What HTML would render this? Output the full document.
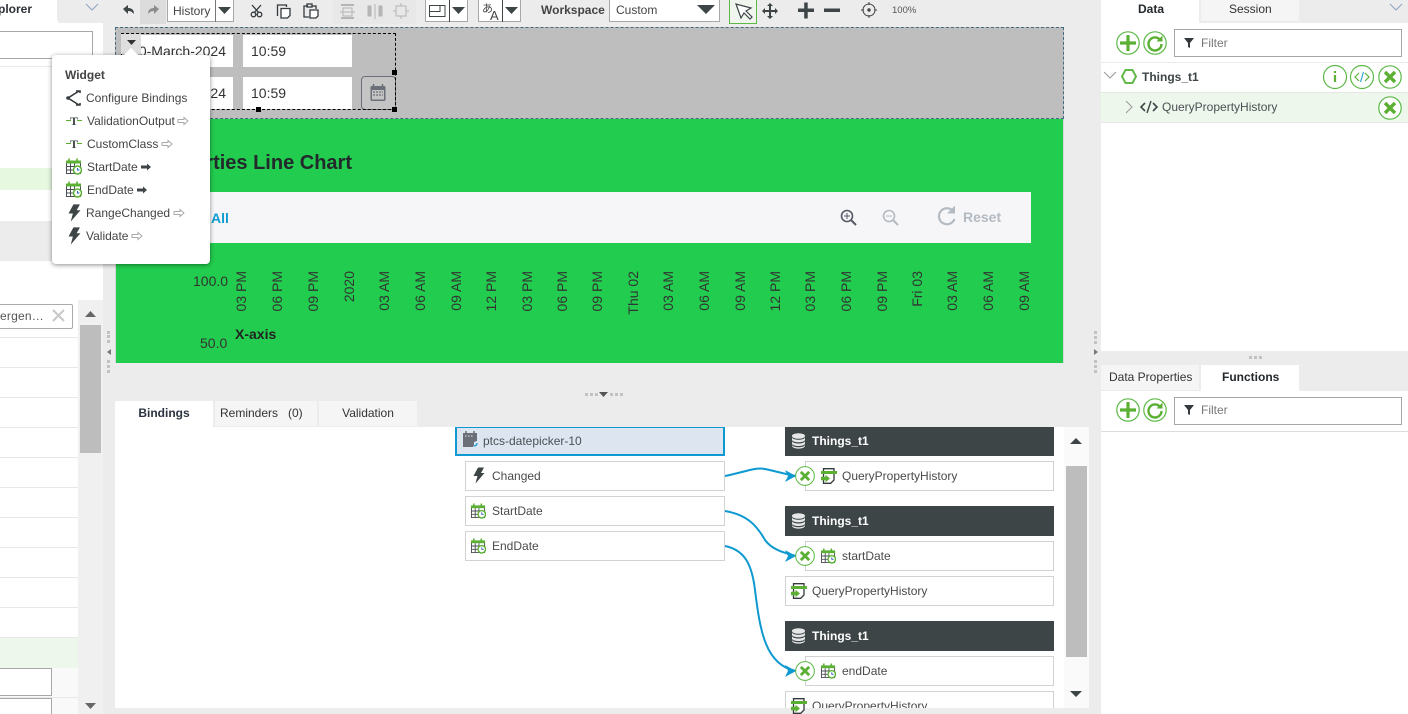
<!DOCTYPE html>
<html style="width:1408px;height:714px;overflow:hidden"><head><meta charset="utf-8">
<style>
*{box-sizing:border-box}
html,body{margin:0;padding:0}
body{width:1408px;height:714px;overflow:hidden;position:relative;background:#ececec;font:12px "Liberation Sans",sans-serif;color:#444}
.a{position:absolute}
.t{position:absolute;white-space:nowrap;line-height:14px}
.row{position:absolute;left:0;width:78px;height:1px;background:#e8e8e8}
.node{position:absolute;background:#fff;border:1px solid #d2d2d2;height:30px;line-height:28px;color:#4a4a4a}
.hd{position:absolute;background:#3d4547;color:#fff;font-weight:bold;left:785px;width:269px;height:30px;line-height:30px;padding-left:27px}
.box{position:absolute;background:#fff;border:1px solid #a8a8a8}
.filter{position:absolute;left:1174px;width:228px;height:28px;background:#fff;border:1px solid #a6a6a6;color:#777;line-height:26px;padding-left:26px}
.tab{position:absolute;text-align:center;color:#333;height:25px;line-height:24px}
svg{position:absolute;left:0;top:0;overflow:visible}
</style></head>
<body>
<!-- left panel -->
<div class="a" style="left:0;top:0;width:103px;height:714px;background:#f0f0f0"></div>
<div class="a" style="left:0;top:0;width:103px;height:300px;background:#fff"></div>
<div class="a" style="left:57px;top:0;width:46px;height:23px;background:#ececec;border-radius:0 0 0 3px"></div>
<div class="t" style="left:-2px;top:2px;font-weight:bold;color:#2c3136">plorer</div>
<div class="box" style="left:-2px;top:31px;width:95px;height:28px"></div>
<div class="a" style="left:0;top:66px;width:103px;height:1px;background:#eaeaea"></div>
<div class="a" style="left:0;top:168px;width:103px;height:22px;background:#e6f8e0"></div>
<div class="a" style="left:0;top:221px;width:103px;height:40px;background:#ececec"></div>
<div class="a" style="left:0;top:300px;width:78px;height:414px;background:#fff"></div>
<div class="a" style="left:-4px;top:304px;width:77px;height:25px;background:#fff;border:1px solid #aaa;border-radius:2px"></div>
<div class="t" style="left:0;top:309px;color:#555;letter-spacing:.2px">ergen…</div>
<div class="row" style="top:337px"></div><div class="row" style="top:367px"></div><div class="row" style="top:397px"></div><div class="row" style="top:427px"></div><div class="row" style="top:457px"></div><div class="row" style="top:487px"></div><div class="row" style="top:517px"></div><div class="row" style="top:547px"></div><div class="row" style="top:577px"></div><div class="row" style="top:607px"></div><div class="row" style="top:637px"></div>
<div class="a" style="left:0;top:638px;width:78px;height:30px;background:#eef7ec"></div>
<div class="a" style="left:0;top:668px;width:78px;height:46px;background:#f9f9f9"></div>
<div class="a" style="left:0;top:697px;width:78px;height:1px;background:#e8e8e8"></div>
<div class="box" style="left:-2px;top:668px;width:54px;height:28px"></div>
<div class="box" style="left:-2px;top:698px;width:54px;height:16px;border-bottom:none"></div>
<div class="a" style="left:80px;top:325px;width:21px;height:128px;background:#bdbdbd"></div>

<!-- toolbar -->
<div class="a" style="left:140px;top:0;width:26px;height:24px;background:#dcdcdc"></div>
<div class="box" style="left:167px;top:-2px;width:67px;height:24px"></div>
<div class="a" style="left:215px;top:0;width:1px;height:22px;background:#777"></div>
<div class="t" style="left:173px;top:4px;color:#444">History</div>
<div class="a" style="left:333px;top:0;width:83px;height:24px;background:#e8e8e8"></div>
<div class="box" style="left:425px;top:-2px;width:43px;height:24px"></div>
<div class="a" style="left:449px;top:0;width:1px;height:22px;background:#444"></div>
<div class="box" style="left:478px;top:-2px;width:43px;height:24px"></div>
<div class="a" style="left:502px;top:0;width:1px;height:22px;background:#444"></div>
<div class="t" style="left:541px;top:3px;font-weight:bold;color:#444">Workspace</div>
<div class="box" style="left:609px;top:-2px;width:111px;height:24px"></div>
<div class="t" style="left:616px;top:3px;color:#444">Custom</div>
<div class="a" style="left:729px;top:-2px;width:28px;height:26px;background:#f0f5ee;border:1px solid #5cb946"></div>
<div class="t" style="left:892px;top:4px;font-size:9.5px;color:#555">100%</div>

<!-- canvas -->
<div class="a" style="left:115px;top:27px;width:949px;height:92px;background:#bebebe;border:1px dashed #456a80"></div>
<div class="a" style="left:115px;top:119px;width:1px;height:244px;background:#d8d8d8"></div>
<div class="a" style="left:1063px;top:119px;width:1px;height:244px;background:#d8d8d8"></div>
<div class="a" style="left:116px;top:119px;width:947px;height:244px;background:#22cc4e"></div>
<div class="a" style="left:141px;top:35px;width:92px;height:32px;background:#fff;overflow:hidden"><div class="t" style="right:7px;top:9px;font-size:14px;color:#333">10-March-2024</div></div>
<div class="a" style="left:243px;top:35px;width:109px;height:32px;background:#fff"><div class="t" style="left:8px;top:9px;font-size:14px;color:#333">10:59</div></div>
<div class="a" style="left:141px;top:77px;width:92px;height:32px;background:#fff;overflow:hidden"><div class="t" style="right:7px;top:9px;font-size:14px;color:#333">10-March-2024</div></div>
<div class="a" style="left:243px;top:77px;width:109px;height:32px;background:#fff"><div class="t" style="left:8px;top:9px;font-size:14px;color:#333">10:59</div></div>
<div class="a" style="left:361px;top:76px;width:35px;height:34px;border:1px solid #6b7078;border-radius:4px;background:#c4c4c4"></div>
<div class="a" style="left:121px;top:33px;width:275px;height:77px;border:1px dashed #000"></div>
<div class="a" style="left:121px;top:34px;width:20px;height:20px;background:#dedede"></div>
<div class="a" style="left:392px;top:70px;width:5px;height:5px;background:#000"></div>
<div class="a" style="left:256px;top:107px;width:5px;height:5px;background:#000"></div>
<div class="a" style="left:392px;top:107px;width:5px;height:5px;background:#000"></div>
<div class="t" style="right:1056px;top:151px;font-size:20px;line-height:24px;font-weight:bold;color:#23282c">Properties Line Chart</div>
<div class="a" style="left:135px;top:192px;width:896px;height:51px;background:#f6f6f8"></div>
<div class="t" style="left:211px;top:211px;font-size:14px;font-weight:bold;color:#0f9bd1">All</div>
<div class="t" style="left:963px;top:209px;font-size:14px;line-height:16px;font-weight:bold;color:#b4bac2">Reset</div>
<div class="t" style="left:193px;top:274px;font-size:14px;color:#333">100.0</div>
<div class="t" style="left:200px;top:336px;font-size:14px;color:#333">50.0</div>
<div class="t" style="left:235px;top:327px;font-size:14px;font-weight:bold;color:#222">X-axis</div>

<!-- bottom panel -->
<div class="a" style="left:115px;top:427px;width:974px;height:281px;background:#fff"></div>
<div class="a" style="left:1064px;top:427px;width:25px;height:281px;background:#fafafa"></div>
<div class="a" style="left:1066px;top:466px;width:21px;height:191px;background:#bdbdbd"></div>
<div class="tab" style="left:115px;top:401px;width:98px;height:26px;background:#fff;font-weight:bold;color:#2c3340">Bindings</div>
<div class="tab" style="left:215px;top:401px;width:102px;background:#f5f5f5"></div>
<div class="t" style="left:220px;top:406px;color:#333">Reminders</div>
<div class="t" style="left:288px;top:406px;color:#333">(0)</div>
<div class="tab" style="left:319px;top:401px;width:98px;background:#f5f5f5">Validation</div>

<div class="a" style="left:455px;top:427px;width:270px;height:29px;background:#dde6f0;border:2px solid #0e9ad0;border-top:1px solid #0e9ad0;line-height:26px;padding-left:26px;color:#4a4f55">ptcs-datepicker-10</div>
<div class="node" style="left:465px;top:461px;width:260px;padding-left:26px">Changed</div>
<div class="node" style="left:465px;top:496px;width:260px;padding-left:26px">StartDate</div>
<div class="node" style="left:465px;top:531px;width:260px;padding-left:26px">EndDate</div>
<div class="hd" style="top:427px;height:29px;line-height:28px">Things_t1</div>
<div class="hd" style="top:506px">Things_t1</div>
<div class="hd" style="top:621px">Things_t1</div>
<div class="node" style="left:805px;top:461px;width:249px;padding-left:36px">QueryPropertyHistory</div>
<div class="node" style="left:805px;top:541px;width:249px;padding-left:36px">startDate</div>
<div class="node" style="left:785px;top:576px;width:269px;padding-left:26px">QueryPropertyHistory</div>
<div class="node" style="left:805px;top:656px;width:249px;padding-left:36px">endDate</div>
<div class="a" style="left:785px;top:691px;width:269px;height:17px;overflow:hidden"><div class="node" style="left:0;top:0;width:269px;padding-left:26px">QueryPropertyHistory</div></div>

<!-- right panel -->
<div class="a" style="left:1101px;top:0;width:299px;height:351px;background:#fff"></div>
<div class="a" style="left:1400px;top:22px;width:8px;height:329px;background:#fff"></div>
<div class="a" style="left:1199px;top:0;width:209px;height:23px;background:#ececec"></div>
<div class="a" style="left:1201px;top:0;width:98px;height:21px;background:#f5f5f5"></div>
<div class="t" style="left:1138px;top:2px;font-weight:bold;color:#23282c">Data</div>
<div class="t" style="left:1229px;top:2px;color:#333">Session</div>
<div class="filter" style="top:29px">Filter</div>
<div class="a" style="left:1101px;top:62px;width:307px;height:1px;background:#ececec"></div>
<div class="a" style="left:1101px;top:92px;width:307px;height:31px;background:#eef7ec;border-top:1px solid #e6e6e6;border-bottom:1px solid #e6e6e6"></div>
<div class="t" style="left:1142px;top:70px;font-weight:bold;color:#3d4547">Things_t1</div>
<div class="t" style="left:1162px;top:100px;color:#4a4f55">QueryPropertyHistory</div>
<div class="a" style="left:1101px;top:365px;width:98px;height:25px;background:#f5f5f5"></div>
<div class="a" style="left:1201px;top:365px;width:98px;height:26px;background:#fff"></div>
<div class="a" style="left:1101px;top:391px;width:307px;height:323px;background:#fff"></div>
<div class="t" style="left:1109px;top:370px;color:#333">Data Properties</div>
<div class="t" style="left:1222px;top:370px;font-weight:bold;color:#23282c">Functions</div>
<div class="filter" style="top:397px;line-height:24px">Filter</div>
<div class="a" style="left:1101px;top:431px;width:307px;height:1px;background:#dcdcdc"></div>

<svg width="1408" height="714" viewBox="0 0 1408 714">
<defs>
<symbol id="cal" viewBox="0 0 16 16"><path d="M0.500 3.500h14v11.500h-14z" fill="#fff" stroke="#4a4f55"/><rect x="0" y="2" width="15" height="3" fill="#5bb033"/><path d="M3 0v3M11 0v3" stroke="#5bb033" stroke-width="1.600"/><path d="M0 8h15M0 11.500h15M4.500 5v10M8.500 5v10" stroke="#4a4f55"/><circle cx="11.500" cy="11.500" r="4" fill="#fff" stroke="#5bb033" stroke-width="1.500"/><path d="M11.500 9.500v2h2" fill="none" stroke="#2a62b8"/></symbol>
<symbol id="bolt" viewBox="0 0 12 16"><path d="M5 0h6L8 5.500h3.500L2.500 16l2-7.500H0.500z" fill="#3d4547"/></symbol>
<symbol id="svc" viewBox="0 0 16 16"><path d="M2.500 0.700h10.500V12l-3.300 3.300H2.500z" fill="#fff" stroke="#33393c" stroke-width="1.300"/><rect x="0" y="3" width="16" height="3" fill="#5bb033"/><path d="M0 8.700h4.500V6.800l4.500 3.700-4.500 3.700v-2H0z" fill="#5bb033"/></symbol>
<symbol id="x" viewBox="0 0 24 24"><circle cx="12" cy="12" r="11.200" fill="#fff" stroke="#5bb946" stroke-width="1.200"/><path d="M7 7l10 10M17 7L7 17" stroke="#5bb033" stroke-width="3.400"/></symbol>
<symbol id="db" viewBox="0 0 14 16"><ellipse cx="7" cy="3" rx="6.500" ry="2.800" fill="#e6e8e8"/><path d="M0.500 4.500c1 3 12 3 13 0v2.500c-1 3-12 3-13 0zM0.500 8.300c1 3 12 3 13 0v2.500c-1 3-12 3-13 0zM0.500 12c1 3 12 3 13 0v1c-1 3.500-12 3.500-13 0z" fill="#e6e8e8"/></symbol>
<symbol id="plus" viewBox="0 0 24 24"><circle cx="12" cy="12" r="11.200" fill="#fff" stroke="#5bb946" stroke-width="1.200"/><path d="M12 4v16M4 12h16" stroke="#5bb033" stroke-width="3.200"/></symbol>
<symbol id="ref" viewBox="0 0 24 24"><circle cx="12" cy="12" r="11.200" fill="#fff" stroke="#5bb946" stroke-width="1.200"/><path d="M17.500 9.500A6.500 6.500 0 1 0 18.500 13" fill="none" stroke="#5bb033" stroke-width="2.400"/><path d="M13.500 10.500h6v-6z" fill="#5bb033"/></symbol>
</defs>

<!-- header chevrons -->
<path d="M86 4l6 6 6-6" fill="none" stroke="#8fa3c0"/>
<path d="M1390 4l6 6 6-6" fill="none" stroke="#8fa3c0"/>
<!-- undo/redo -->
<path d="M123 9l5-4v3c4 0 6 2 6 6-2-2-3-3-6-3v3z" fill="#3d4547"/>
<path d="M159 9l-5-4v3c-4 0-6 2-6 6 2-2 3-3 6-3v3z" fill="#8c8c8c"/>
<path d="M218 7h13l-6.500 7z" fill="#3d4547"/>
<!-- cut copy paste -->
<g fill="none" stroke="#33393c" stroke-width="1.300">
<path d="M252 5l7 8M261 5l-7 8"/><circle cx="253.500" cy="14.500" r="2.300"/><circle cx="259.500" cy="14.500" r="2.300"/>
<path d="M277.500 16V5h9v2"/><path d="M281 8.500h9v7l-2.500 2.500H281z" fill="#fff"/>
<path d="M308 6h-4v11h5M312 6h4v3"/><rect x="307" y="4" width="5" height="3"/><path d="M310 10h8v6l-2 2h-6z" fill="#fff"/>
</g>
<!-- align greyed -->
<g fill="none" stroke="#b5b5b5">
<path d="M341 5h13M341 18h13" stroke-width="2"/><path d="M340 12h15M343 8h9v8h-9z"/>
<rect x="368" y="6" width="3" height="10" fill="#b5b5b5"/><rect x="379" y="6" width="3" height="10" fill="#b5b5b5"/><path d="M375 4v15"/>
<rect x="396" y="6" width="10" height="10"/><path d="M401 3v3M401 16v3M393 11h3M406 11h3"/>
</g>
<!-- layout + lang -->
<path d="M429.500 5.500h15.500v11h-15.500zM429.500 11.500h10.500V5.500" fill="none" stroke="#3d4547"/>
<path d="M452 7h13l-6.500 7z M505 7h13l-6.500 7z M697 5h18l-9 9z" fill="#3d4547"/>
<text x="482" y="12" font-size="11" fill="#444" font-family="Noto Sans CJK JP,sans-serif">あ</text>
<text x="490" y="20" font-size="13" fill="#444" font-family="Liberation Sans,sans-serif">A</text>
<!-- select, move, plus, minus, target -->
<path d="M736 4l5 14 3-5 6 6 2-2-6-6 5-3z" fill="#fff" stroke="#3d4547" stroke-width="1.200"/>
<path d="M770 3l3 3h-2v4h4V8l3 3-3 3v-2h-4v4h2l-3 3-3-3h2v-4h-4v2l-3-3 3-3v2h4V6h-2z" fill="#3d4547"/>
<path d="M798 8.500h16v3.500h-16zM804.200 2.500h3.500v16h-3.500zM824 8.500h16v3.500h-16z" fill="#3d4547"/>
<circle cx="869" cy="10" r="6" fill="none" stroke="#444"/><circle cx="869" cy="10" r="1.700" fill="#444"/><path d="M869 2v3M869 15v3M861 10h3M874 10h3" stroke="#444"/>
<!-- canvas dropdown arrow -->
<path d="M127 40h9l-4.500 5z" fill="#333"/>
<!-- calendar button -->
<g><rect x="370.500" y="86" width="15" height="15" rx="1.500" fill="#6b7078"/><rect x="372" y="90" width="12" height="9.500" fill="#c4c4c4"/><path d="M373.500 84v3M382.500 84v3" stroke="#6b7078" stroke-width="1.500"/><path d="M373 92h10M373 95h10" stroke="#6b7078" stroke-width="1.300" stroke-dasharray="2 1"/></g>
<!-- chart toolbar icons -->
<circle cx="847" cy="216" r="5.500" fill="none" stroke="#555a66" stroke-width="1.600"/><path d="M851 220l5 5" stroke="#555a66" stroke-width="2"/><path d="M844 216h6M847 213v6" stroke="#555a66"/>
<circle cx="889" cy="216" r="5.500" fill="none" stroke="#b4bac2" stroke-width="1.600"/><path d="M893 220l5 5" stroke="#b4bac2" stroke-width="2"/><path d="M886 216h6" stroke="#b4bac2"/>
<path d="M953 211a8 8 0 1 0 1.500 8" fill="none" stroke="#b4bac2" stroke-width="2.200"/><path d="M947 213.500h8v-8z" fill="#b4bac2"/>
<!-- chart labels -->
<g font-family="Liberation Sans,sans-serif" font-size="14" fill="#333" text-anchor="end">
<text transform="translate(246,271) rotate(-90)">03 PM</text>
<text transform="translate(282,271) rotate(-90)">06 PM</text>
<text transform="translate(318,271) rotate(-90)">09 PM</text>
<text transform="translate(354,271) rotate(-90)">2020</text>
<text transform="translate(389,271) rotate(-90)">03 AM</text>
<text transform="translate(425,271) rotate(-90)">06 AM</text>
<text transform="translate(461,271) rotate(-90)">09 AM</text>
<text transform="translate(496,271) rotate(-90)">12 PM</text>
<text transform="translate(532,271) rotate(-90)">03 PM</text>
<text transform="translate(567,271) rotate(-90)">06 PM</text>
<text transform="translate(602,271) rotate(-90)">09 PM</text>
<text transform="translate(638,271) rotate(-90)">Thu 02</text>
<text transform="translate(673,271) rotate(-90)">03 AM</text>
<text transform="translate(709,271) rotate(-90)">06 AM</text>
<text transform="translate(745,271) rotate(-90)">09 AM</text>
<text transform="translate(780,271) rotate(-90)">12 PM</text>
<text transform="translate(815,271) rotate(-90)">03 PM</text>
<text transform="translate(851,271) rotate(-90)">06 PM</text>
<text transform="translate(887,271) rotate(-90)">09 PM</text>
<text transform="translate(922,271) rotate(-90)">Fri 03</text>
<text transform="translate(957,271) rotate(-90)">03 AM</text>
<text transform="translate(993,271) rotate(-90)">06 AM</text>
<text transform="translate(1029,271) rotate(-90)">09 AM</text>
</g>
<!-- gutters -->
<g fill="#c2c2c2">
<rect x="107" y="331" width="3" height="3"/><rect x="107" y="335" width="3" height="3"/><rect x="107" y="340" width="3" height="3"/><rect x="107" y="360" width="3" height="3"/><rect x="107" y="365" width="3" height="3"/><rect x="107" y="370" width="3" height="3"/>
<rect x="1094" y="331" width="3" height="3"/><rect x="1094" y="336" width="3" height="3"/><rect x="1094" y="341" width="3" height="3"/><rect x="1094" y="360" width="3" height="3"/><rect x="1094" y="365" width="3" height="3"/><rect x="1094" y="370" width="3" height="3"/>
<rect x="1249" y="356" width="3" height="3"/><rect x="1254" y="356" width="3" height="3"/><rect x="1259" y="356" width="3" height="3"/>
<rect x="585" y="393" width="3" height="3"/><rect x="590" y="393" width="3" height="3"/><rect x="595" y="393" width="3" height="3"/><rect x="610" y="393" width="3" height="3"/><rect x="615" y="393" width="3" height="3"/><rect x="620" y="393" width="3" height="3"/>
</g>
<path d="M107 352l4-3v6zM1098 352l-4-3v6z" fill="#777"/>
<path d="M599 392h9l-4.500 5z" fill="#555"/>
<!-- scroll arrows -->
<path d="M85 317h11l-5.500-6zM85 703h11l-5.500 6z" fill="#666"/>
<path d="M1070 444h12l-6-6zM1070 691h12l-6 6z" fill="#3d4547"/>
<!-- connectors -->
<g fill="none" stroke="#0e9ad0" stroke-width="2">
<path d="M725 476C745 472 755 467 765 469S785 474 796 476"/>
<path d="M725 511C748 515 757 526 765 540C772 550 785 553 796 556"/>
<path d="M725 546C745 550 752 565 755 590C760 630 765 665 796 671"/>
</g>
<path d="M785 470l11 6-11 6 3-6zM785 550l11 6-11 6 3-6zM785 665l11 6-11 6 3-6z" fill="#0e9ad0"/>
<!-- node icons -->
<path d="M463 433h14v8l-3 1v3l-1 2h-10z" fill="#6b7078"/><path d="M466 431v3M474 431v3" stroke="#6b7078" stroke-width="1.500"/><path d="M465 436h1.500M468 436h1.500M471 436h1.500" stroke="#dde6f0"/><path d="M477 443a3 3 0 0 1-3 3" fill="none" stroke="#0e9ad0" stroke-width="1.300"/>
<use href="#bolt" x="473" y="467" width="12" height="17"/>
<use href="#cal" x="471" y="503" width="15" height="16"/>
<use href="#cal" x="471" y="538" width="15" height="16"/>
<use href="#db" x="791" y="433" width="15" height="16"/>
<use href="#db" x="791" y="513" width="15" height="16"/>
<use href="#db" x="791" y="628" width="15" height="16"/>
<use href="#x" x="795" y="466" width="20" height="20"/>
<use href="#x" x="795" y="546" width="20" height="20"/>
<use href="#x" x="795" y="661" width="20" height="20"/>
<use href="#svc" x="821" y="468" width="16" height="16"/>
<use href="#cal" x="821" y="548" width="15" height="16"/>
<use href="#svc" x="791" y="583" width="16" height="16"/>
<use href="#cal" x="821" y="663" width="15" height="16"/>
<use href="#svc" x="791" y="698" width="16" height="16"/>
<!-- right panel icons -->
<use href="#plus" x="1116" y="31" width="24" height="24"/>
<use href="#ref" x="1143" y="31" width="24" height="24"/>
<path d="M1184 38h10l-4 5v5l-2-1v-4z" fill="#33393c"/>
<path d="M1104 72l6 6 6-6" fill="none" stroke="#999"/>
<path d="M1125.500 70h7l3.500 6.500-3.500 6.500h-7l-3.500-6.500z" fill="#fff" stroke="#63b84a" stroke-width="2"/>
<circle cx="1335" cy="77" r="11.500" fill="#fff" stroke="#5bb946" stroke-width="1.200"/>
<path d="M1335 71v2M1335 75v7" stroke="#5bb033" stroke-width="2.200"/>
<circle cx="1362" cy="77" r="11.500" fill="#fff" stroke="#5bb946" stroke-width="1.200"/>
<path d="M1359 73l-4 4 4 4M1365 73l4 4-4 4" fill="none" stroke="#5bb033" stroke-width="1.200"/><path d="M1363.500 72l-3 10" stroke="#35a8d6" stroke-width="1.200"/>
<use href="#x" x="1378" y="65" width="24" height="24"/>
<path d="M1126 101l6 6-6 6" fill="none" stroke="#999"/>
<path d="M1145 103l-4 4 4 4M1153 103l4 4-4 4" fill="none" stroke="#3d4547" stroke-width="1.600"/><path d="M1151 101l-4 12" stroke="#3d4547" stroke-width="1.400"/>
<use href="#x" x="1378" y="96" width="24" height="24"/>
<use href="#plus" x="1116" y="398" width="24" height="24"/>
<use href="#ref" x="1143" y="398" width="24" height="24"/>
<path d="M1184 405h10l-4 5v5l-2-1v-4z" fill="#33393c"/>
</svg>

<!-- popup -->
<div class="a" style="left:52px;top:55px;width:158px;height:209px;background:#fff;border-radius:4px;box-shadow:0 1px 5px rgba(0,0,0,.45)"></div>
<div class="a" style="left:126px;top:50px;width:10px;height:10px;background:#fff;transform:rotate(45deg)"></div>
<div class="t" style="left:65px;top:68px;font-weight:bold;color:#444">Widget</div>
<div class="t" style="left:86px;top:91px">Configure Bindings</div>
<div class="t" style="left:87px;top:114px">ValidationOutput</div>
<div class="t" style="left:87px;top:137px">CustomClass</div>
<div class="t" style="left:87px;top:160px">StartDate</div>
<div class="t" style="left:87px;top:183px">EndDate</div>
<div class="t" style="left:86px;top:206px">RangeChanged</div>
<div class="t" style="left:86px;top:229px">Validate</div>
<svg width="1408" height="714" viewBox="0 0 1408 714">
<path d="M79 91l-11 7 11 7" fill="none" stroke="#33393c" stroke-width="1.600"/><circle cx="68" cy="98" r="1.800" fill="#33393c"/><path d="M76 91h4v2M76 105h4v-2" fill="none" stroke="#33393c" stroke-width="1.600"/>
<path d="M66 120.500h5M77 120.500h5" stroke="#5bb033"/><text x="74" y="125" text-anchor="middle" font-size="12" font-weight="bold" font-family="Liberation Serif,serif" fill="#3d4547">T</text>
<path d="M66 143.500h5M77 143.500h5" stroke="#5bb033"/><text x="74" y="148" text-anchor="middle" font-size="12" font-weight="bold" font-family="Liberation Serif,serif" fill="#3d4547">T</text>
<use href="#cal" x="66" y="158" width="16" height="17"/>
<use href="#cal" x="66" y="181" width="16" height="17"/>
<use href="#bolt" x="68" y="204" width="13" height="18"/>
<use href="#bolt" x="68" y="227" width="13" height="18"/>
<g fill="#fff" stroke="#aaa"><path d="M178 119.500h6v-2l4 3.500-4 3.500v-2h-6z"/><path d="M162 142.500h6v-2l4 3.500-4 3.500v-2h-6z"/><path d="M174 211.500h6v-2l4 3.500-4 3.500v-2h-6z"/><path d="M132 234.500h6v-2l4 3.500-4 3.500v-2h-6z"/></g>
<path d="M141 165.500h6v-2l4 3.500-4 3.500v-2h-6zM137 188.500h6v-2l4 3.500-4 3.500v-2h-6z" fill="#3d4547"/>
</svg>
<!-- chip x -->
<svg width="1408" height="714" viewBox="0 0 1408 714"><path d="M53 310l11 11M64 310l-11 11" stroke="#c8c8c8" stroke-width="2"/></svg>
</body></html>
